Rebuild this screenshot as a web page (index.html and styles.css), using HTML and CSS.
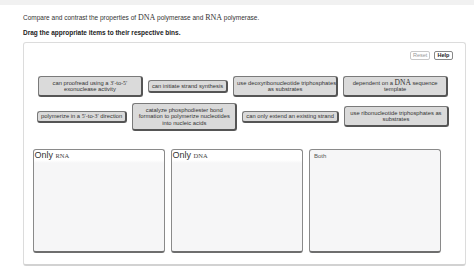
FILE: index.html
```html
<!DOCTYPE html>
<html>
<head>
<meta charset="utf-8">
<link rel="stylesheet" href="styles.css">
</head>
<body>
<div class="topbar"></div>
<div class="content">
  <p class="prompt">Compare and contrast the properties of <span class="m">DNA</span> polymerase and <span class="m">RNA</span> polymerase.</p>
  <p class="instr">Drag the appropriate items to their respective bins.</p>
  <div class="panel">
    <div class="toolbar">
      <button class="btn reset">Reset</button>
      <button class="btn help">Help</button>
    </div>
    <div class="items">
      <div class="item multi">can proofread using a <span class="m">3′</span>-to-<span class="m">5′</span><br>exonuclease activity</div>
      <div class="item">can initiate strand synthesis</div>
      <div class="item multi">use deoxyribonucleotide triphosphates<br>as substrates</div>
      <div class="item multi">dependent on a <span class="m big">DNA</span> sequence<br>template</div>
      <div class="item">polymerize in a <span class="m">5′</span>-to-<span class="m">3′</span> direction</div>
      <div class="item multi">catalyze phosphodiester bond<br>formation to polymerize nucleotides<br>into nucleic acids</div>
      <div class="item">can only extend an existing strand</div>
      <div class="item multi">use ribonucleotide triphosphates as<br>substrates</div>
    </div>
    <div class="bins">
      <div class="bin top-white"><div class="bin-label big-label">Only <span class="m sc">RNA</span></div></div>
      <div class="bin top-white"><div class="bin-label big-label">Only <span class="m sc">DNA</span></div></div>
      <div class="bin"><div class="bin-label small-label">Both</div></div>
    </div>
  </div>
</div>
</body>
</html>
```
FILE: styles.css
```css
* { box-sizing: border-box; }
html, body { margin: 0; padding: 0; background: #fff; }
body {
  font-family: "Liberation Sans", Arial, sans-serif;
  color: #333;
  width: 474px;
  height: 267px;
  overflow: hidden;
}
.topbar { height: 5px; background: #f1f1f1; }
.content { padding: 0 8px 0 23px; }
.prompt {
  margin: 9px 0 0 0;
  font-size: 6.5px;
  line-height: 8px;
  color: #333;
}
.prompt .m { font-size: 8px; }
.instr {
  margin: 7px 0 0 0;
  font-size: 6.5px;
  line-height: 8px;
  font-weight: bold;
  color: #222;
}
.m { font-family: "Liberation Serif", "Times New Roman", serif; }
.panel {
  margin-top: 5px;
  width: 443px;
  height: 224px;
  border: 1px solid #dcdcdc;
  border-bottom: 2px solid #d2d2d2;
  border-radius: 3px;
  background: #fff;
  padding: 8px 12px 0 9px;
}
.toolbar {
  display: flex;
  justify-content: flex-end;
  gap: 4px;
  height: 9px;
}
.btn {
  font-family: "Liberation Sans", Arial, sans-serif;
  font-size: 5.5px;
  line-height: 7px;
  height: 9px;
  padding: 0 2px;
  background: #fff;
  border-radius: 2px;
  margin: 0;
}
.reset { width: 20px; border: 1px solid #c8c8c8; color: #999; }
.help { width: 19px; border: 1px solid #888; color: #222; font-weight: bold; }
.items {
  display: flex;
  flex-wrap: wrap;
  justify-content: center;
  align-items: center;
  column-gap: 5px;
  row-gap: 6px;
  margin-top: 16px;
}
.item {
  font-size: 5.8px;
  line-height: 6.5px;
  text-align: center;
  white-space: nowrap;
  color: #333;
  background: #dadada;
  border: 1px solid #7a7a7a;
  border-right-width: 2px;
  border-bottom-width: 2px;
  border-right-color: #555;
  border-bottom-color: #555;
  border-radius: 3px;
  padding: 1.5px 3px;
}
.item.multi { width: 105px; padding-top: 2.5px; padding-bottom: 2.5px; }
.item .big { font-size: 7.5px; }
.bins {
  display: grid;
  grid-template-columns: repeat(3, 132px);
  column-gap: 6px;
  margin-top: 18px;
}
.bin {
  height: 104px;
  border: 1px solid #8a8a8a;
  border-bottom: 2px solid #6e6e6e;
  border-radius: 3px;
  background: #f6f6f7;
}
.bin.top-white { background: linear-gradient(#ffffff 0, #ffffff 10px, #f6f6f7 13px); }
.bin-label { color: #333; }
.big-label { font-size: 9px; line-height: 11px; padding-left: 0.5px; }
.big-label .sc { font-size: 6.5px; color: #444; }
.small-label { font-size: 6px; line-height: 8px; padding: 2px 0 0 4px; color: #555; }
```
